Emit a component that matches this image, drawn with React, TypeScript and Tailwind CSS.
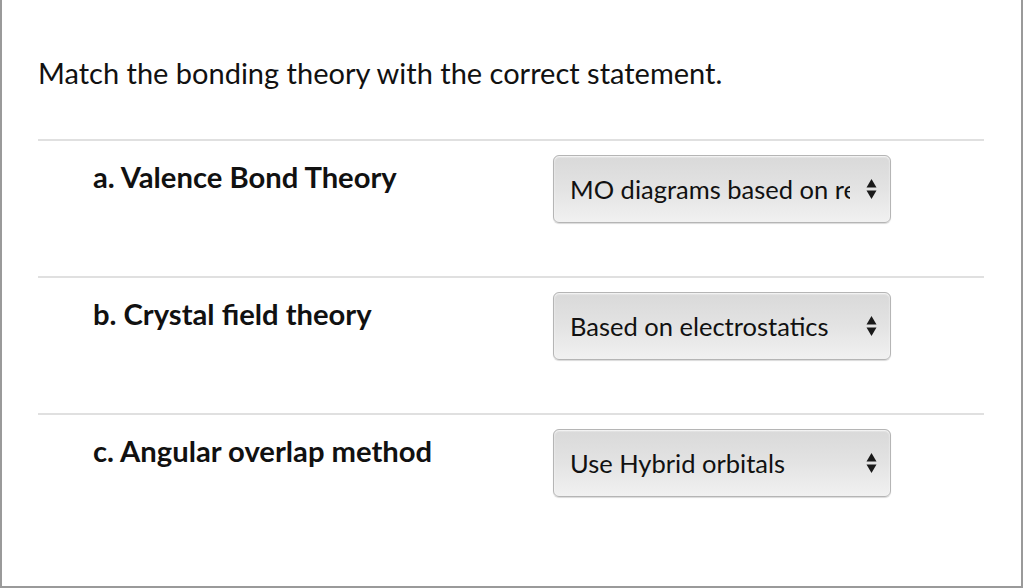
import React from 'react';

const rows = [
  { label: 'a. Valence Bond Theory', value: 'MO diagrams based on re' },
  { label: 'b. Crystal field theory', value: 'Based on electrostatics' },
  { label: 'c. Angular overlap method', value: 'Use Hybrid orbitals' },
];

const Arrows = () => (
  <svg width="11" height="22" viewBox="0 0 11 22" className="shrink-0">
    <path d="M5.5 1 L10.5 9.5 H0.5 Z" fill="#1a1a1a" />
    <path d="M5.5 21 L10.5 12.5 H0.5 Z" fill="#1a1a1a" />
  </svg>
);

export default function App() {
  return (
    <div className="w-[1023px] h-[588px] bg-white border-l-2 border-r-2 border-b-2 border-[#9a9a9a] font-['Lato',sans-serif] text-[#111]">
      <div className="pl-[36px] pr-[37px] pt-[54px]">
        <h1 className="text-[29px] leading-[38px] font-normal">Match the bonding theory with the correct statement.</h1>

        <div className="mt-[47px]">
          {rows.map((row) => (
            <div key={row.label} className="border-t-2 border-[#e0e0e0] h-[137px] flex items-start">
              <div className="pl-[55px] pt-[17px] w-[515px] text-[29.2px] leading-[38px] font-bold">{row.label}</div>
              <div className="mt-[14px] w-[338px] h-[68px] rounded-[6px] border border-[#b5b5b5] bg-gradient-to-b from-[#d9d9d9] via-[#e3e3e3] to-[#f1f1f1] shadow-[inset_0_1px_2px_rgba(255,255,255,0.9),0_1px_1px_rgba(0,0,0,0.15)] flex items-center pl-[16px] pr-[13px]">
                <span className="flex-1 overflow-hidden whitespace-nowrap text-[25.5px] leading-[32px] mr-[16px]">{row.value}</span>
                <Arrows />
              </div>
            </div>
          ))}
        </div>
      </div>
    </div>
  );
}
